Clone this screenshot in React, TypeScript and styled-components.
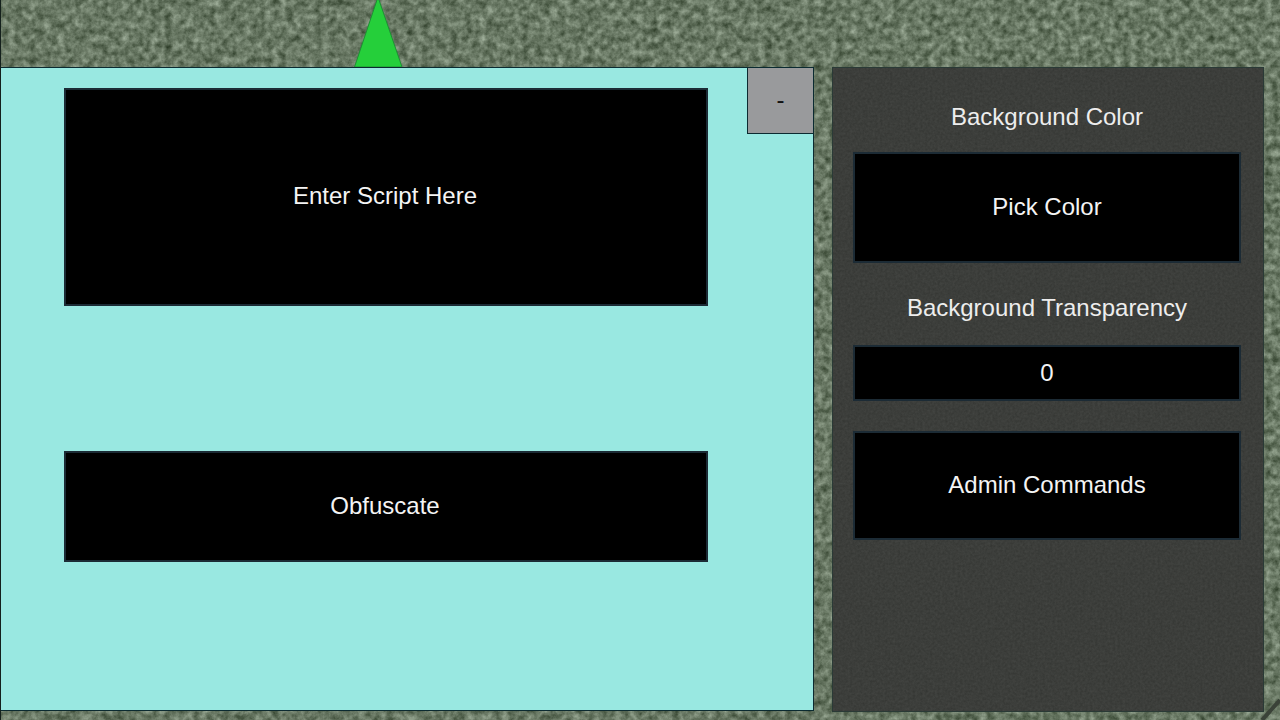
import { FC } from 'react'
import styled, { createGlobalStyle } from 'styled-components'

// grainy surface, each channel is the noise scaled by k and lifted by the base colour
const grain = (freq: string, k: number, r: number, g: number, b: number) =>
  `url("data:image/svg+xml,${encodeURIComponent(
    `<svg xmlns='http://www.w3.org/2000/svg' width='1280' height='720'><filter id='n' x='0' y='0' width='100%' height='100%' color-interpolation-filters='sRGB'><feTurbulence type='fractalNoise' baseFrequency='${freq}' numOctaves='4' seed='11'/><feColorMatrix values='0 ${k} 0 0 ${r}  0 ${k} 0 0 ${g}  0 ${k} 0 0 ${b}  0 0 0 0 1'/></filter><rect width='1280' height='720' filter='url(#n)'/></svg>`
  )}")`

const GlobalStyle = createGlobalStyle`
  html, body {
    margin: 0;
    padding: 0;
    width: 1280px;
    height: 720px;
    overflow: hidden;
  }
  body {
    font-family: "Liberation Sans", Arial, sans-serif;
  }
`

const Scene = styled.div`
  position: relative;
  width: 1280px;
  height: 720px;
  box-sizing: border-box;
  padding-top: 67px;
  display: flex;
  align-items: flex-start;
  border-left: 1px solid #14201c;
  background-color: #66755f;
  background-image: ${grain('0.14', 0.5, 0.16, 0.22, 0.14)};
`

const Marker = styled.svg`
  position: absolute;
  left: 349px;
  top: 0;
  width: 58px;
  height: 67px;
`

const CornerStreak = styled.svg`
  position: absolute;
  right: 0;
  bottom: 0;
  width: 22px;
  height: 24px;
`

const MainPanel = styled.section`
  position: relative;
  box-sizing: border-box;
  width: 813px;
  height: 644px;
  padding: 20px 105px 0 63px;
  display: flex;
  flex-direction: column;
  background: #99e8e1;
  border: 1px solid #0b2a30;
  border-left: 0;
`

const SidePanel = styled.section`
  box-sizing: border-box;
  width: 432px;
  height: 645px;
  margin-left: 18px;
  padding: 0 22px 0 20px;
  display: flex;
  flex-direction: column;
  background-color: #3c3f3b;
  background-image: ${grain('0.4', 0.07, 0.2, 0.207, 0.195)};
  border: 1px solid #2a3a36;
  color: #ececec;
`

const ActionBox = styled.div<{ $h: number; $mt?: number }>`
  box-sizing: border-box;
  height: ${(p) => p.$h}px;
  margin-top: ${(p) => p.$mt ?? 0}px;
  padding-bottom: 2px;
  display: flex;
  align-items: center;
  justify-content: center;
  background: #000;
  border: 2px solid #1c2b35;
  color: #f4f4f4;
  font-size: 24px;
  white-space: nowrap;
`

const MainBox = styled(ActionBox)`
  padding-right: 2px;
`

const ValueBox = styled(ActionBox)`
  padding-bottom: 0;
`

const Label = styled.div<{ $h: number; $pt: number }>`
  box-sizing: border-box;
  height: ${(p) => p.$h}px;
  padding-top: ${(p) => p.$pt}px;
  display: flex;
  align-items: center;
  justify-content: center;
  font-size: 24px;
  color: #ededed;
  white-space: nowrap;
`

const MinimizeButton = styled.button`
  position: absolute;
  top: -1px;
  right: -1px;
  box-sizing: border-box;
  width: 67px;
  height: 67px;
  padding: 0 0 2px;
  background: #999a9c;
  border: 1px solid #0b2a30;
  color: #111;
  font: 24px "Liberation Sans", Arial, sans-serif;
`

const App: FC = () => (
  <>
    <GlobalStyle />
    <Scene>
      <Marker viewBox="0 0 58 67">
        <polygon points="4.5,67 28,-3 52,67" fill="#25cf3a" stroke="#1f8f35" strokeWidth="1" />
      </Marker>
      <CornerStreak viewBox="0 0 22 24">
        <path d="M4 24 L22 4" stroke="#3a4238" strokeWidth="4" fill="none" />
      </CornerStreak>
      <MainPanel>
        <MainBox $h={218}>Enter Script Here</MainBox>
        <MainBox $h={111} $mt={145}>Obfuscate</MainBox>
        <MinimizeButton>-</MinimizeButton>
      </MainPanel>
      <SidePanel>
        <Label $h={84} $pt={14}>Background Color</Label>
        <ActionBox $h={111}>Pick Color</ActionBox>
        <Label $h={82} $pt={8}>Background Transparency</Label>
        <ValueBox $h={56}>0</ValueBox>
        <ActionBox $h={109} $mt={30}>Admin Commands</ActionBox>
      </SidePanel>
    </Scene>
  </>
)

export default App
